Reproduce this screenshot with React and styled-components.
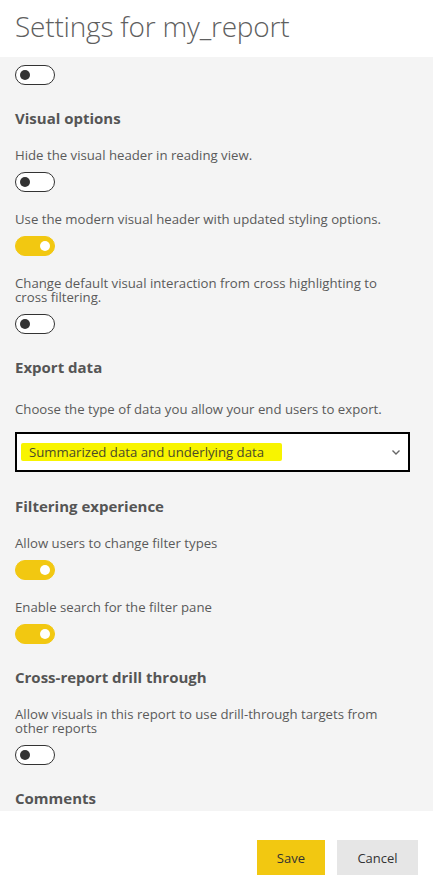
import React from 'react';
import styled, { createGlobalStyle } from 'styled-components';

const GlobalStyle = createGlobalStyle`
  html, body {
    margin: 0;
    padding: 0;
    background: #ffffff;
  }
  body {
    font-family: "Open Sans", "Noto Sans", "Liberation Sans", sans-serif;
  }
`;

const Page = styled.div`
  width: 433px;
  height: 893px;
  display: flex;
  flex-direction: column;
  background: #ffffff;
  overflow: hidden;
`;

const Header = styled.div`
  height: 57px;
  padding: 0 15px;
  box-sizing: border-box;
  display: flex;
  align-items: center;
`;

const Title = styled.h1`
  margin: 0 0 6px;
  font-size: 28px;
  font-weight: 300;
  color: #5f5f5f;
  letter-spacing: -0.2px;
`;

const Panel = styled.div`
  height: 754px;
  box-sizing: border-box;
  padding: 8px 15px 0;
  background: #f4f4f4;
  overflow: hidden;
`;

const Setting = styled.div`
  margin-bottom: 20px;
`;

const Heading = styled.h2`
  margin: 23px 0 20px;
  font-size: 15px;
  line-height: 20px;
  font-weight: 700;
  color: #555555;
`;

const Label = styled.div`
  max-width: 388px;
  margin-bottom: ${p => (p.$spaced ? '16px' : '10px')};
  margin-top: ${p => (p.$spaced ? '25px' : '0')};
  font-size: 13.2px;
  line-height: 14px;
  color: #5a5a5a;
`;

const Switch = styled.div`
  width: 40px;
  height: 20px;
  box-sizing: border-box;
  border-radius: 10px;
  border: 1px solid ${p => (p.$on ? '#f2c811' : '#333333')};
  background: ${p => (p.$on ? '#f2c811' : '#ffffff')};
  display: flex;
  align-items: center;
  justify-content: ${p => (p.$on ? 'flex-end' : 'flex-start')};
  padding: 0 4px;
`;

const Knob = styled.div`
  width: 10px;
  height: 10px;
  border-radius: 50%;
  background: ${p => (p.$on ? '#ffffff' : '#333333')};
`;

const Select = styled.div`
  height: 40px;
  box-sizing: border-box;
  width: 395px;
  border: 2px solid #000000;
  background: #ffffff;
  display: flex;
  align-items: center;
  justify-content: space-between;
  padding: 0 5px 0 4px;
  margin-bottom: 24px;
`;

const Highlight = styled.span`
  display: inline-block;
  background: #f8f400;
  padding: 2px 18px 2px 8px;
  border-radius: 2px;
  font-size: 13.2px;
  line-height: 14px;
  color: #4a4a2a;
`;

const Chevron = styled.svg`
  width: 10px;
  height: 10px;
  margin-right: 2px;
`;

const Footer = styled.div`
  flex: 1;
  display: flex;
  justify-content: flex-end;
  align-items: flex-start;
  gap: 12px;
  padding: 29px 15px 0;
`;

const Button = styled.button`
  height: 35px;
  padding: 0 ${p => (p.$primary ? '20px' : '19px')};
  min-width: ${p => (p.$primary ? '68px' : '81px')};
  border: none;
  background: ${p => (p.$primary ? '#f2c811' : '#e6e6e6')};
  color: #333333;
  font-family: inherit;
  font-size: 13px;
  cursor: pointer;
`;

function Toggle({ on, label }) {
  return (
    <Setting>
      {label && <Label>{label}</Label>}
      <Switch $on={on}>
        <Knob $on={on} />
      </Switch>
    </Setting>
  );
}

export default function App() {
  return (
    <Page>
      <GlobalStyle />
      <Header>
        <Title>Settings for my_report</Title>
      </Header>
      <Panel>
        <Toggle on={false} />

        <Heading>Visual options</Heading>
        <Toggle on={false} label="Hide the visual header in reading view." />
        <Toggle on label="Use the modern visual header with updated styling options." />
        <Toggle
          on={false}
          label="Change default visual interaction from cross highlighting to cross filtering."
        />

        <Heading>Export data</Heading>
        <Label $spaced>Choose the type of data you allow your end users to export.</Label>
        <Select>
          <Highlight>Summarized data and underlying data</Highlight>
          <Chevron viewBox="0 0 10 10">
            <path d="M1.5 3.5 L5 7 L8.5 3.5" fill="none" stroke="#666" strokeWidth="1.4" />
          </Chevron>
        </Select>

        <Heading>Filtering experience</Heading>
        <Toggle on label="Allow users to change filter types" />
        <Toggle on label="Enable search for the filter pane" />

        <Heading>Cross-report drill through</Heading>
        <Toggle
          on={false}
          label="Allow visuals in this report to use drill-through targets from other reports"
        />

        <Heading>Comments</Heading>
      </Panel>
      <Footer>
        <Button $primary>Save</Button>
        <Button>Cancel</Button>
      </Footer>
    </Page>
  );
}
